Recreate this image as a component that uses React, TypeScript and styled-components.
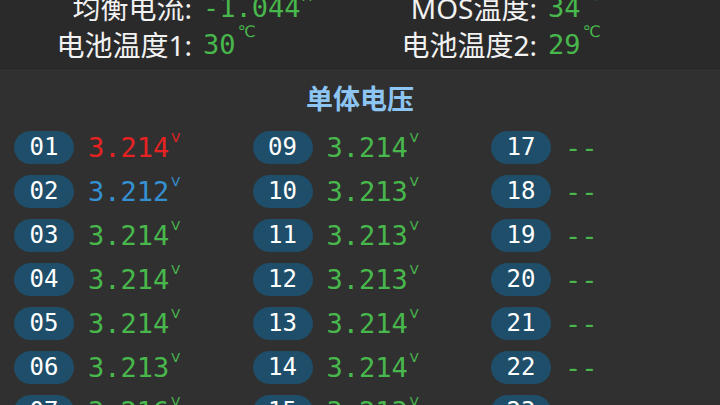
import React from 'react';
import styled, { createGlobalStyle } from 'styled-components';

type Tone = 'high' | 'low' | 'normal';

type Cell = {
  id: string;
  voltage?: string;
  tone?: Tone;
};

const GlobalStyle = createGlobalStyle`
  html, body {
    margin: 0;
    padding: 0;
    height: 100%;
    overflow: hidden;
    background: #303030;
  }
  #root {
    height: 100%;
  }
`;

const toneColor: Record<Tone, string> = {
  high: '#e62222',
  low: '#3590d2',
  normal: '#48b84c',
};

const Screen = styled.div`
  display: flex;
  flex-direction: column;
  height: 100%;
  background: #303030;
  font-family: 'Noto Sans', 'Noto Sans CJK SC', sans-serif;
  color: #f2f2f2;

  & > * {
    flex-shrink: 0;
  }
`;

const InfoPanel = styled.section`
  display: grid;
  grid-template-columns: 360px 360px;
  grid-auto-rows: 37px;
  margin-top: -11px;
  padding-bottom: 5px;
  background: #2a2a2a;
  border-bottom: 1px solid #262626;
`;

const Stat = styled.div<{ $labelWidth: number }>`
  display: grid;
  grid-template-columns: ${({ $labelWidth }) => `${$labelWidth}px`} auto;
  align-items: center;
  column-gap: 11px;
`;

const StatLabel = styled.span`
  text-align: right;
  font-size: 28px;
  line-height: 1;
  font-family: 'Noto Sans', 'Noto Sans CJK SC', sans-serif;
  white-space: nowrap;
`;

const StatValue = styled.span`
  display: inline-flex;
  align-items: flex-start;
  font-family: 'DejaVu Sans Mono', monospace;
  font-size: 27px;
  line-height: 1;
  color: #48b84c;
`;

const Unit = styled.span<{ $size?: number; $lift?: number }>`
  font-family: 'DejaVu Sans', sans-serif;
  font-size: ${({ $size }) => $size ?? 13}px;
  line-height: 1;
  margin-left: 2px;
  margin-top: ${({ $lift }) => -($lift ?? 1)}px;
`;

const Title = styled.h2`
  margin: 0;
  height: 56px;
  display: flex;
  align-items: center;
  justify-content: center;
  font-family: 'Noto Sans CJK SC', sans-serif;
  font-size: 27px;
  font-weight: 700;
  color: #8cc4f2;
`;

const CellGrid = styled.div`
  display: grid;
  grid-auto-flow: column;
  grid-template-rows: repeat(8, 44px);
  grid-template-columns: repeat(3, 238.5px);
  padding-left: 14px;
`;

const CellRow = styled.div`
  display: flex;
  align-items: center;
  gap: 14px;
`;

const Badge = styled.span`
  display: flex;
  align-items: center;
  justify-content: center;
  width: 60px;
  height: 33px;
  border-radius: 17px;
  background: #1e4e69;
  color: #ffffff;
  font-family: 'DejaVu Sans Mono', monospace;
  font-size: 24px;
`;

const Voltage = styled.span<{ $tone: Tone }>`
  display: inline-flex;
  align-items: flex-start;
  font-family: 'DejaVu Sans Mono', monospace;
  font-size: 27px;
  line-height: 1;
  color: ${({ $tone }) => toneColor[$tone]};
`;

const Dashes = styled.span`
  font-family: 'DejaVu Sans Mono', monospace;
  font-size: 27px;
  color: #48b84c;
`;

const stats = [
  { label: '均衡电流:', value: '-1.044', unit: 'A', width: 192 },
  { label: 'MOS温度:', value: '34', unit: '℃', width: 177 },
  { label: '电池温度1:', value: '30', unit: '℃', width: 192 },
  { label: '电池温度2:', value: '29', unit: '℃', width: 177 },
];

const cells: Cell[] = [
  { id: '01', voltage: '3.214', tone: 'high' },
  { id: '02', voltage: '3.212', tone: 'low' },
  { id: '03', voltage: '3.214' },
  { id: '04', voltage: '3.214' },
  { id: '05', voltage: '3.214' },
  { id: '06', voltage: '3.213' },
  { id: '07', voltage: '3.216' },
  { id: '08', voltage: '3.214' },
  { id: '09', voltage: '3.214' },
  { id: '10', voltage: '3.213' },
  { id: '11', voltage: '3.213' },
  { id: '12', voltage: '3.213' },
  { id: '13', voltage: '3.214' },
  { id: '14', voltage: '3.214' },
  { id: '15', voltage: '3.213' },
  { id: '16', voltage: '3.214' },
  ...Array.from({ length: 8 }, (_, i) => ({ id: String(17 + i) })),
];

export default function App() {
  return (
    <Screen>
      <GlobalStyle />
      <InfoPanel>
        {stats.map((s) => (
          <Stat key={s.label} $labelWidth={s.width}>
            <StatLabel>{s.label}</StatLabel>
            <StatValue>
              {s.value}
              {s.unit === '℃' ? (
                <Unit $size={16} $lift={7}>
                  {s.unit}
                </Unit>
              ) : (
                <Unit $lift={4}>{s.unit}</Unit>
              )}
            </StatValue>
          </Stat>
        ))}
      </InfoPanel>

      <Title>单体电压</Title>

      <CellGrid>
        {cells.map((cell) => (
          <CellRow key={cell.id}>
            <Badge>{cell.id}</Badge>
            {cell.voltage ? (
              <Voltage $tone={cell.tone ?? 'normal'}>
                {cell.voltage}
                <Unit $lift={3}>V</Unit>
              </Voltage>
            ) : (
              <Dashes>--</Dashes>
            )}
          </CellRow>
        ))}
      </CellGrid>
    </Screen>
  );
}
